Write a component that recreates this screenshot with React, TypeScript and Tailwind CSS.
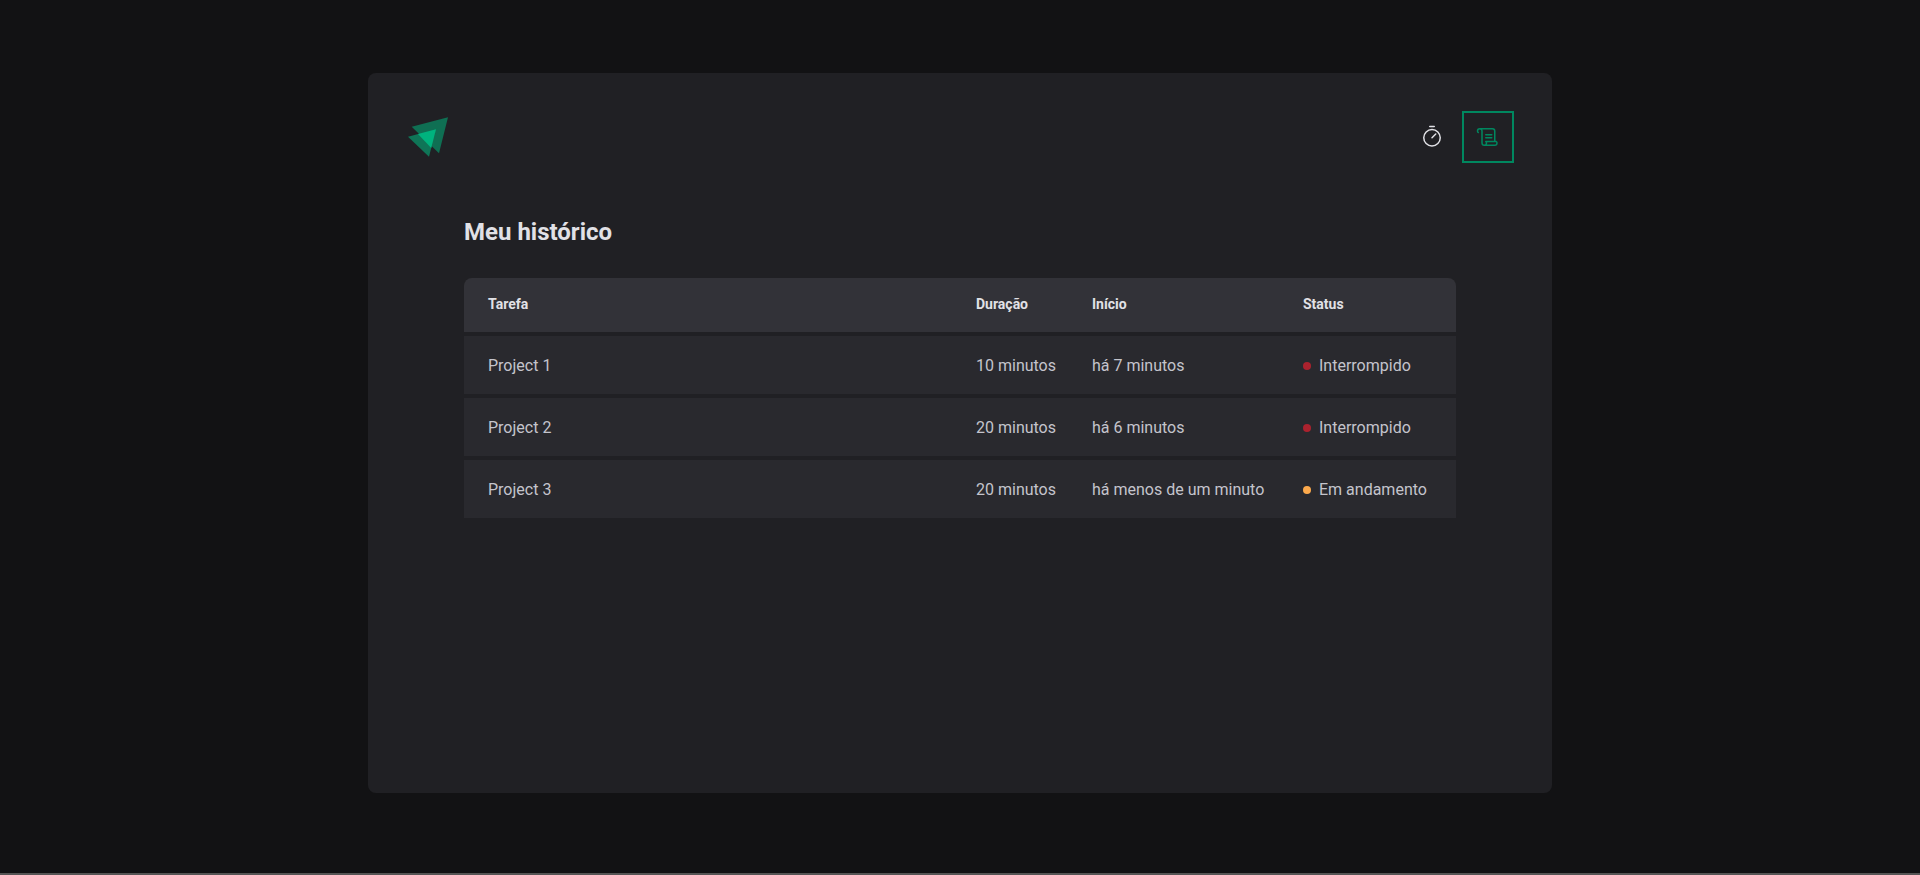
import { PiScroll, PiTimer } from "react-icons/pi";

const history = [
  { task: "Project 1", duration: "10 minutos", start: "há 7 minutos", status: "Interrompido", dot: "bg-[#ab222e]" },
  { task: "Project 2", duration: "20 minutos", start: "há 6 minutos", status: "Interrompido", dot: "bg-[#ab222e]" },
  { task: "Project 3", duration: "20 minutos", start: "há menos de um minuto", status: "Em andamento", dot: "bg-[#fba94c]" },
];

function Logo() {
  return (
    <svg width="40" height="40" viewBox="0 0 40 40" fill="none">
      <path d="M3.7 9.7 L40 0.3 L31 36.3 Z" fill="#0f6f53" />
      <path d="M0 19.7 L28 12.3 L21 39.7 Z" fill="#0f7557" />
      <path d="M10 17.1 L28 12.3 L23.2 31 Z" fill="#00b37e" />
    </svg>
  );
}

export default function App() {
  return (
    <div className="flex h-[875px] flex-col overflow-hidden bg-[#121214] font-['Roboto',sans-serif] text-[#e1e1e6]">
      <div className="flex-1 pt-[73px]">
        <div className="mx-auto flex h-[720px] w-[1184px] flex-col rounded-lg bg-[#202024] pt-[38px] pr-[38px] pb-10 pl-10">
          <header className="flex items-center justify-between">
            <Logo />
            <nav className="flex items-center gap-1">
              <div className="flex h-[52px] w-[52px] items-center justify-center text-[#e1e1e6]">
                <PiTimer size={24} />
              </div>
              <div className="flex h-[52px] w-[52px] items-center justify-center border-2 border-[#00875f] text-[#00875f]">
                <PiScroll size={24} />
              </div>
            </nav>
          </header>
          <main className="flex flex-1 flex-col pt-[52px] pr-[58px] pl-14">
            <h1 className="text-2xl font-bold leading-[34px]">Meu histórico</h1>
            <table className="mt-[29px] w-full table-fixed border-separate border-spacing-0 text-left">
              <thead>
                <tr className="text-sm font-bold leading-[22px]">
                  <th className="w-[496px] rounded-tl-lg bg-[#323238] pt-[15px] pb-[17px] pl-6">Tarefa</th>
                  <th className="w-[116px] bg-[#323238] px-4 pt-[15px] pb-[17px]">Duração</th>
                  <th className="w-[211px] bg-[#323238] px-4 pt-[15px] pb-[17px]">Início</th>
                  <th className="w-[169px] rounded-tr-lg bg-[#323238] px-4 pt-[15px] pb-[17px]">Status</th>
                </tr>
              </thead>
              <tbody>
                {history.map((item) => (
                  <tr key={item.task} className="text-base leading-[26px] text-[#c4c4cc]">
                    <td className="border-t-4 border-[#202024] bg-[#29292e] pt-[17px] pb-[15px] pl-6">{item.task}</td>
                    <td className="border-t-4 border-[#202024] bg-[#29292e] px-4 pt-[17px] pb-[15px]">{item.duration}</td>
                    <td className="border-t-4 border-[#202024] bg-[#29292e] px-4 pt-[17px] pb-[15px]">{item.start}</td>
                    <td className="border-t-4 border-[#202024] bg-[#29292e] px-4 pt-[17px] pb-[15px]">
                      <span className="flex items-center gap-2">
                        <span className={`h-2 w-2 rounded-full ${item.dot}`} />
                        {item.status}
                      </span>
                    </td>
                  </tr>
                ))}
              </tbody>
            </table>
          </main>
        </div>
      </div>
      <div className="h-0.5 bg-[#555555]" />
    </div>
  );
}
